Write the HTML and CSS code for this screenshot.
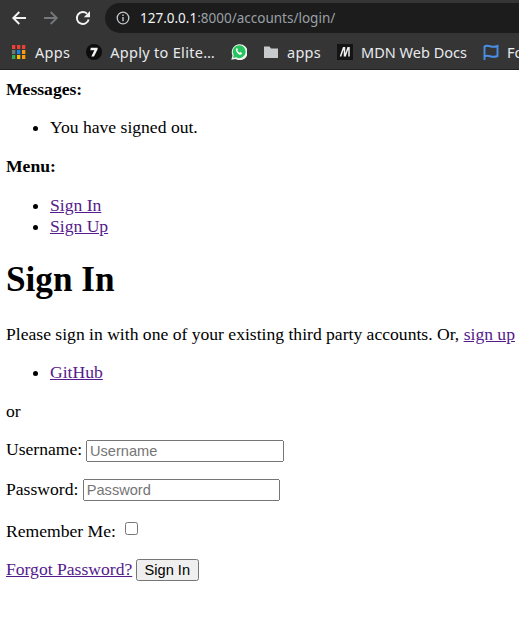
FILE: index.html
```html
<!DOCTYPE html>
<html lang="en">
<head>
  <meta charset="UTF-8">
  <meta name="viewport" content="width=device-width, initial-scale=1.0">
  <title>Sign In</title>
  <link rel="stylesheet" href="styles.css">
</head>
<body>
  <header class="browser">
    <div class="toolbar">
      <svg class="nav-icon" viewBox="0 0 16 16"><path d="M15 8H3M8.300 2L2.300 8l6 6" fill="none" stroke="#f1f3f4" stroke-width="1.900"/></svg>
      <svg class="nav-icon" viewBox="0 0 16 16"><path d="M1 8h12M7.700 2l6 6-6 6" fill="none" stroke="#75787b" stroke-width="1.900"/></svg>
      <svg class="nav-icon" viewBox="0 0 16 16"><path d="M13.700 9.500A6 6 0 1 1 12 3.600" fill="none" stroke="#f1f3f4" stroke-width="1.900"/><path d="M15 1v6.200H8.800z" fill="#f1f3f4"/></svg>
      <div class="omnibox">
        <svg class="info-icon" viewBox="0 0 14 14"><circle cx="7" cy="7" r="5.800" fill="none" stroke="#c4c7c9" stroke-width="1.300"/><path d="M6.300 6h1.400v4.200H6.300zM6.300 3.600h1.400V5H6.300z" fill="#c4c7c9"/></svg>
        <span class="url"><span class="url-host">127.0.0.1</span>:8000/accounts/login/</span>
      </div>
    </div>
    <nav class="bookmarks">
      <span class="bookmark">
        <svg class="bm-icon" viewBox="0 0 16 16">
          <rect x="1" y="1" width="3.300" height="4" fill="#ea4335"/><rect x="6" y="1" width="3.300" height="4" fill="#ea4335"/><rect x="11" y="1" width="3.300" height="4" fill="#ea4335"/>
          <rect x="1" y="6" width="3.300" height="4" fill="#6b7b76"/><rect x="6" y="6" width="3.300" height="4" fill="#1a84e8"/><rect x="11" y="6" width="3.300" height="4" fill="#fb9c0c"/>
          <rect x="1" y="11" width="3.300" height="4" fill="#34a853"/><rect x="6" y="11" width="3.300" height="4" fill="#fbbc04"/><rect x="11" y="11" width="3.300" height="4" fill="#fb9c0c"/>
        </svg>
        <span class="bookmark-wide">Apps</span>
      </span>
      <span class="bookmark">
        <svg class="bm-icon" viewBox="0 0 16 16"><circle cx="8" cy="8" r="8" fill="#0d0d0d"/><path d="M4.800 3.800h7l-.4 2L8 12.500H5.300L8.400 6.200H4.300z" fill="#f5f5f5"/></svg>
        <span class="bookmark-wide">Apply to Elite…</span>
      </span>
      <span class="bookmark">
        <svg class="bm-icon" viewBox="0 0 16 16"><path d="M0.300 15.800l1.200-4.200A8 8 0 1 1 4.500 15z" fill="#f4f4f4"/><path d="M2 14l.8-2.800A6.400 6.400 0 1 1 5 13.300z" fill="#25c45f"/><path d="M5.500 4.300c-1.200 1.200-.7 2.900.8 4.600s3.300 2.400 4.500 1.100l.3-1-1.800-1-.8.8c-.9-.4-1.700-1.200-2.200-2.200l.7-.8-.9-1.800z" fill="#fff"/></svg>
      </span>
      <span class="bookmark">
        <svg class="bm-icon" viewBox="0 0 16 16"><path d="M1 2.500h5.500l1.500 2h7V14H1z" fill="#c8cacc"/></svg>
        <span class="bookmark-wide">apps</span>
      </span>
      <span class="bookmark">
        <svg class="bm-icon" viewBox="0 0 16 16"><rect width="16" height="16" fill="#141414"/><path d="M3.500 12.500L6.500 3.800h1v8.700M8 12.500l3-8.700h1v8.700" fill="none" stroke="#eee" stroke-width="1.500"/></svg>
        MDN Web Docs
      </span>
      <span class="bookmark">
        <svg class="bm-icon" viewBox="0 0 16 16"><path d="M1.500 16V2.500c2-1.500 4.500-.5 6.500 0s4 .5 6.500-.5v10c-2.500 1-4.500 1-6.500.5s-4.500-1.500-6.500 0" fill="none" stroke="#4a8fe7" stroke-width="1.900"/></svg>
        Fo
      </span>
    </nav>
  </header>

  <main class="content">
    <p class="first"><strong>Messages:</strong></p>
    <ul>
      <li>You have signed out.</li>
    </ul>
    <p class="menu-title"><strong>Menu:</strong></p>
    <ul>
      <li><a href="#">Sign In</a></li>
      <li><a href="#">Sign Up</a></li>
    </ul>
    <h1>Sign In</h1>
    <p class="intro">Please sign in with one of your existing third party accounts. Or, <a href="#">sign up</a></p>
    <ul>
      <li><a href="#">GitHub</a></li>
    </ul>
    <p>or</p>
    <form>
      <p class="username-row"><label for="id_login">Username:</label> <input id="id_login" type="text" placeholder="Username"></p>
      <p class="password-row"><label for="id_password">Password:</label> <input id="id_password" type="password" placeholder="Password"></p>
      <p class="remember-row"><label for="id_remember">Remember Me:</label> <input id="id_remember" type="checkbox"></p>
      <a href="#">Forgot Password?</a>
      <button type="button">Sign In</button>
    </form>
  </main>
</body>
</html>
```

FILE: styles.css
```css
* {
  box-sizing: border-box;
}

html,
body {
  height: 100%;
  overflow: hidden;
}

body {
  margin: 0;
  background-color: #fff;
  color: #000;
  font-family: "Liberation Serif", serif;
  font-size: 17.6px;
}

a {
  color: #551a8b;
}

/* browser chrome */
.browser {
  height: 70px;
  background-color: #353535;
  border-bottom: 1px solid #202124;
  font-family: "Noto Sans", sans-serif;
  overflow: hidden;
}

.toolbar {
  display: flex;
  align-items: center;
  height: 36px;
  padding: 3px 0 3px 11px;
  gap: 16px;
}

.nav-icon {
  flex: none;
  width: 16px;
  height: 16px;
}

.omnibox {
  display: flex;
  align-items: center;
  flex: none;
  width: 420px;
  height: 30px;
  margin-left: -2px;
  padding-left: 11px;
  gap: 10px;
  background-color: #1c1c1c;
  border-radius: 15px 0 0 15px;
}

.info-icon {
  flex: none;
  width: 14px;
  height: 14px;
}

.url {
  color: #9aa0a6;
  font-size: 13.5px;
  white-space: nowrap;
}

.url-host {
  color: #f1f3f4;
}

.bookmarks {
  display: flex;
  align-items: center;
  height: 31px;
  padding-left: 11px;
  gap: 16px;
  color: #e8eaed;
  font-size: 14.5px;
  white-space: nowrap;
}

.bookmark {
  display: flex;
  align-items: center;
  gap: 8px;
}

.bookmark-wide {
  letter-spacing: 0.3px;
}

.bm-icon {
  flex: none;
  width: 16px;
  height: 16px;
}

/* page content */
.content {
  padding-left: 6px;
}

p {
  margin: 0 0 17.6px;
}

.first {
  margin: 9.4px 0 17px;
}

.menu-title {
  margin-bottom: 18px;
}

ul {
  margin: 0 0 17.6px;
  padding-left: 44px;
}

h1 {
  margin: 22.6px 0 24px;
  font-size: 35.2px;
}

.username-row {
  margin-bottom: 16.6px;
}

.password-row {
  margin-bottom: 17.6px;
}

.remember-row {
  margin-bottom: 17.6px;
}

input[type="text"],
input[type="password"] {
  width: 197px;
  height: 22px;
  padding: 1px 2px;
  font-family: "Liberation Sans", sans-serif;
  font-size: 14.6px;
}

#id_login {
  width: 198px;
  margin-left: -0.6px;
  vertical-align: -1px;
}

input[type="checkbox"] {
  width: 13px;
  height: 13px;
  margin: 3px 3px 7px 5px;
  vertical-align: 2px;
}

button {
  height: 22px;
  margin-left: -0.6px;
  padding: 1px 6.5px;
  font-family: "Liberation Sans", sans-serif;
  font-size: 14.6px;
}
```
